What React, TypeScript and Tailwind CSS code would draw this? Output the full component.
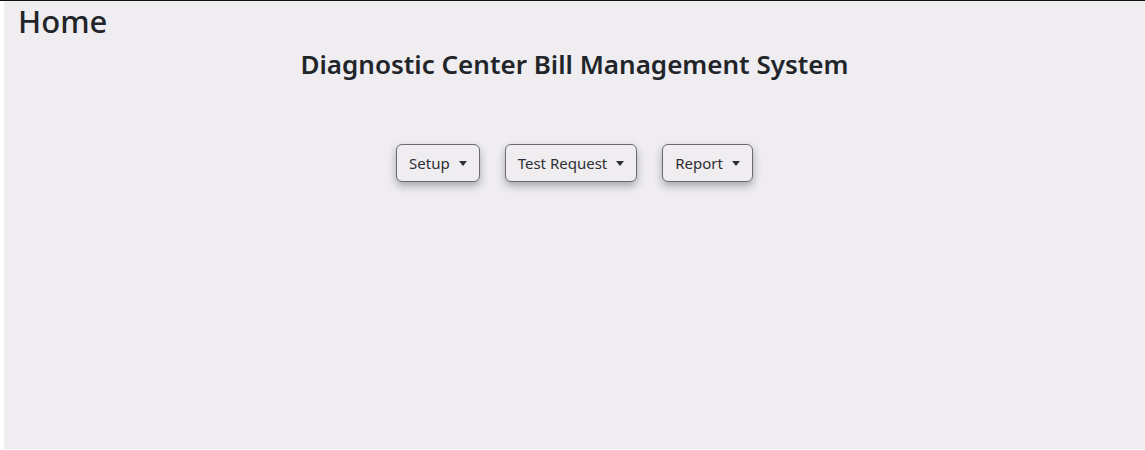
const menus = ["Setup", "Test Request", "Report"];

function DropdownButton({ label }: { label: string }) {
  return (
    <button
      type="button"
      className="flex h-[38px] items-center gap-[9px] rounded-[6px] border border-[#6c6a6e] bg-[#efedf0] px-[12px] text-[15px] text-[#2f2f33] shadow-[0_4px_8px_rgba(0,0,0,0.3)]"
    >
      <span>{label}</span>
      <span className="mt-[1px] h-0 w-0 border-x-[4.5px] border-t-[5px] border-x-transparent border-t-[#2f2f33]" />
    </button>
  );
}

export default function App() {
  return (
    <div className="h-[450px] w-[1145px] border-t border-[#111] bg-white pl-[4px] font-['Noto_Sans',sans-serif]">
      <div className="h-[448px] bg-[#efedf0] px-[14px] text-[#212529]">
        <h2 className="pt-[3px] text-[31px] font-medium leading-[1.1]">Home</h2>
        <h3 className="mt-[11px] text-center text-[26px] font-semibold leading-[1.2]">
          Diagnostic Center Bill Management System
        </h3>
        <div className="mt-[64px] flex justify-center gap-[25px]">
          {menus.map((m) => (
            <DropdownButton key={m} label={m} />
          ))}
        </div>
      </div>
    </div>
  );
}
